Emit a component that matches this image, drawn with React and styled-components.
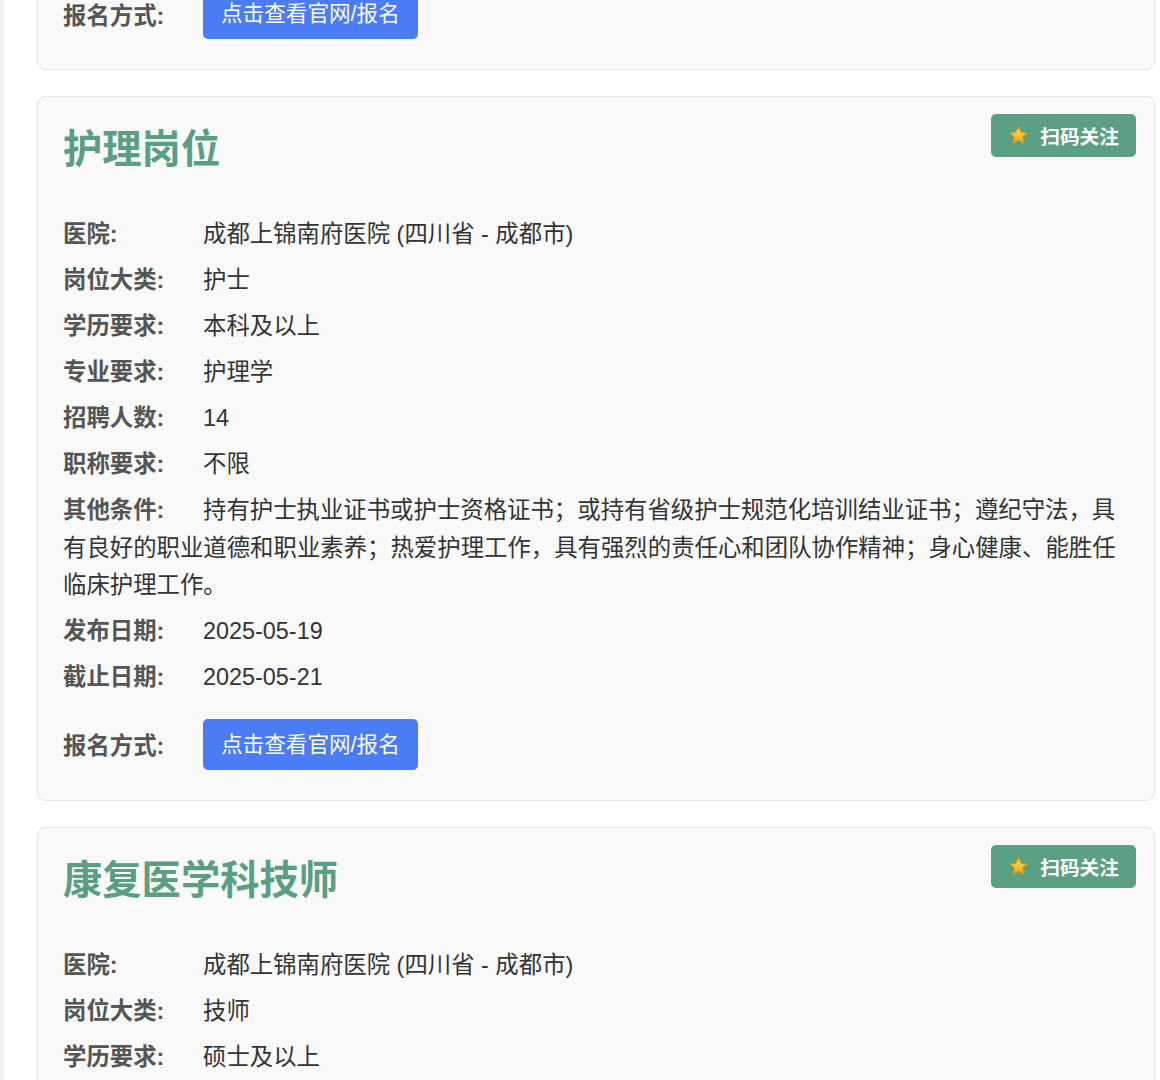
import React from "react";
import styled, { createGlobalStyle } from "styled-components";

const GlobalStyle = createGlobalStyle`
  html, body {
    margin: 0;
    padding: 0;
    background: #fff;
  }
  body {
    border-left: 4px solid #f1f1f1;
    font-family: "Liberation Sans", "Noto Sans CJK SC", sans-serif;
    font-size: 23.4px;
    color: #333;
    overflow: hidden;
  }
`;

const JOBS = [
  {
    id: 1,
    title: "临床医师",
    fields: [
      ["医院:", "成都上锦南府医院 (四川省 - 成都市)"],
      ["岗位大类:", "医生"],
      ["学历要求:", "硕士及以上"],
      ["专业要求:", "临床医学"],
      ["招聘人数:", "3"],
      ["职称要求:", "不限"],
      ["其他条件:", "遵纪守法，具有良好的职业道德；身心健康。"],
      ["发布日期:", "2025-05-19"],
      ["截止日期:", "2025-05-21"],
    ],
  },
  {
    id: 2,
    title: "护理岗位",
    fields: [
      ["医院:", "成都上锦南府医院 (四川省 - 成都市)"],
      ["岗位大类:", "护士"],
      ["学历要求:", "本科及以上"],
      ["专业要求:", "护理学"],
      ["招聘人数:", "14"],
      ["职称要求:", "不限"],
      [
        "其他条件:",
        "持有护士执业证书或护士资格证书；或持有省级护士规范化培训结业证书；遵纪守法，具有良好的职业道德和职业素养；热爱护理工作，具有强烈的责任心和团队协作精神；身心健康、能胜任临床护理工作。",
      ],
      ["发布日期:", "2025-05-19"],
      ["截止日期:", "2025-05-21"],
    ],
  },
  {
    id: 3,
    title: "康复医学科技师",
    fields: [
      ["医院:", "成都上锦南府医院 (四川省 - 成都市)"],
      ["岗位大类:", "技师"],
      ["学历要求:", "硕士及以上"],
      ["专业要求:", "康复医学与理疗学"],
      ["招聘人数:", "1"],
      ["职称要求:", "不限"],
      ["其他条件:", "遵纪守法，具有良好的职业道德；身心健康。"],
      ["发布日期:", "2025-05-19"],
      ["截止日期:", "2025-05-21"],
    ],
  },
];

// list scrolled so the first card only shows its tail
const Feed = styled.main`
  display: flex;
  flex-direction: column;
  gap: 26px;
  margin-top: -559px;
  padding: 0 5px 40px 33px;
`;

const Card = styled.article`
  position: relative;
  background: #f9f9f9;
  border: 1px solid #e3e3e3;
  border-radius: 8px;
  padding: 29px 26px 30px 25px;
`;

const Title = styled.h2`
  margin: 0 0 44px;
  font-size: 39.3px;
  line-height: 46px;
  font-weight: 700;
  color: #5a9e83;
`;

const Badge = styled.div`
  position: absolute;
  top: 17px;
  right: 18px;
  height: 43px;
  display: flex;
  align-items: center;
  gap: 11px;
  padding: 0 17px 0 17px;
  border-radius: 5px;
  background: #5ca083;
  color: #fff;
  font-size: 19.7px;
  font-weight: 700;
`;

const Field = styled.p`
  margin: 0 0 8.6px;
  line-height: 37.4px;
  color: #333;
`;

const Label = styled.strong`
  display: inline-block;
  width: 140px;
  font-weight: 700;
  color: #555;
`;

const SignupRow = styled.div`
  display: flex;
  align-items: center;
  margin-top: 22px;
`;

const SignupButton = styled.a`
  display: inline-block;
  height: 51px;
  line-height: 51px;
  padding: 0 18px;
  border-radius: 5px;
  background: #4a7cf6;
  color: #fff;
  font-size: 21.6px;
  text-decoration: none;
`;

const Star = () => (
  <svg width="21" height="21" viewBox="0 0 24 24">
    <defs>
      <linearGradient id="starFill" x1="0" y1="0" x2="0" y2="1">
        <stop offset="0" stopColor="#ffe36a" />
        <stop offset="1" stopColor="#f3a712" />
      </linearGradient>
    </defs>
    <path
      d="M12 2.2l2.9 6.1 6.6.9-4.8 4.6 1.2 6.6L12 17.2l-5.9 3.2 1.2-6.6-4.8-4.6 6.6-.9z"
      fill="url(#starFill)"
      stroke="#e39a10"
      strokeWidth="1.4"
      strokeLinejoin="round"
    />
  </svg>
);

const renderJob = ({ id, title, fields }) => (
  <Card key={id}>
    <Badge>
      <Star />
      扫码关注
    </Badge>
    <Title>{title}</Title>
    {fields.map(([label, value]) => (
      <Field key={label}>
        <Label>{label}</Label>
        {value}
      </Field>
    ))}
    <SignupRow>
      <Label>报名方式:</Label>
      <SignupButton href="#">点击查看官网/报名</SignupButton>
    </SignupRow>
  </Card>
);

const App = () => (
  <>
    <GlobalStyle />
    <Feed>{JOBS.map(renderJob)}</Feed>
  </>
);

export default App;
